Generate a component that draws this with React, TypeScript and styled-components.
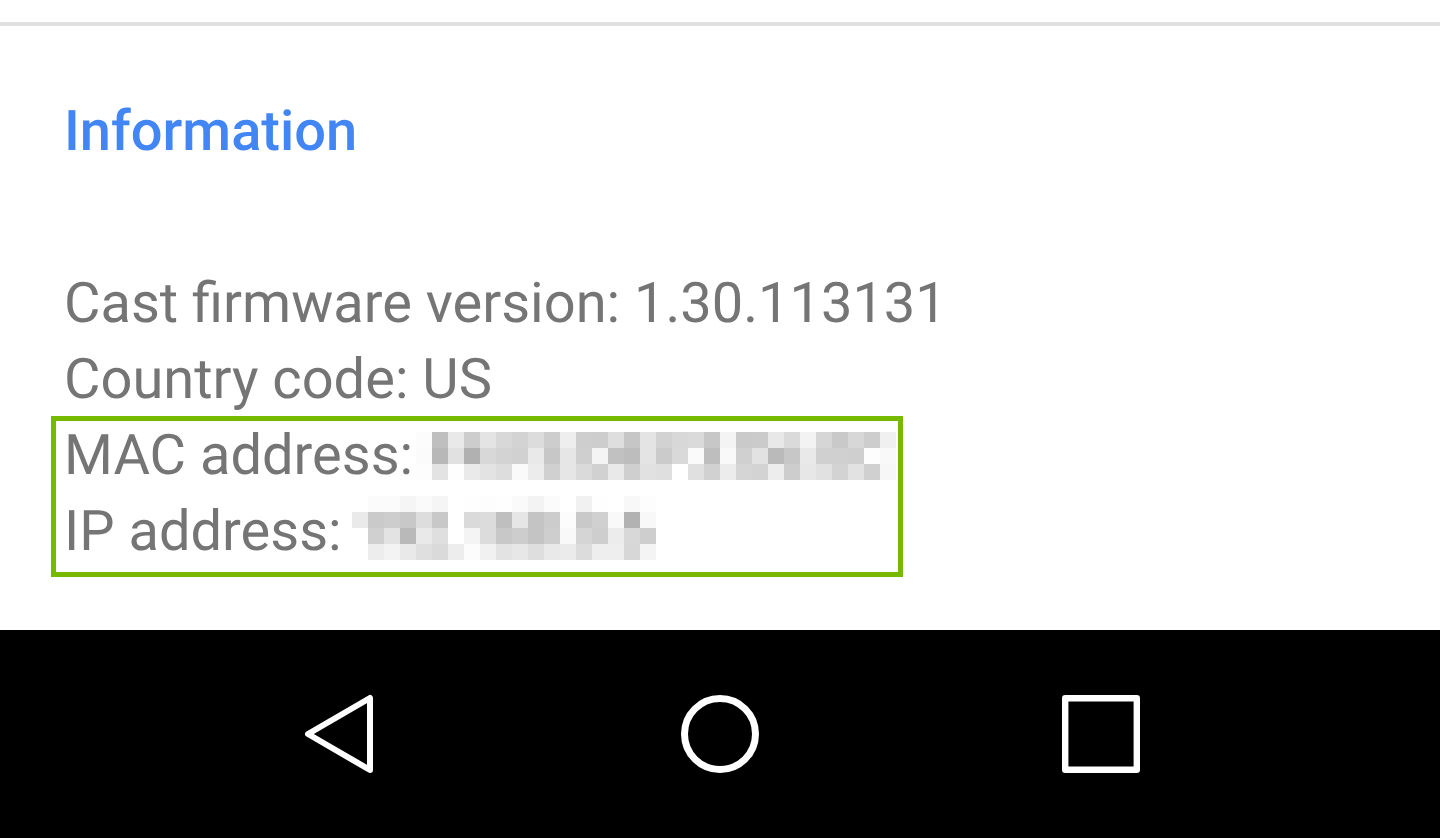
import React from "react";
import styled, { createGlobalStyle } from "styled-components";

const GlobalStyle = createGlobalStyle`
  *, *::before, *::after { box-sizing: border-box; }
  body {
    margin: 0;
    background: #ffffff;
    color: #757575;
    font-family: Roboto, "Liberation Sans", sans-serif;
    text-rendering: geometricPrecision;
  }
`;

const Screen = styled.div`
  display: flex;
  flex-direction: column;
  min-height: 100vh;
`;

const Content = styled.main`
  flex: 1;
  padding: 22px 0 52px;
`;

const Divider = styled.hr`
  height: 4px;
  margin: 0;
  border: 0;
  background: #e0e0e0;
`;

const Section = styled.section`
  padding: 71px 64px 0;
  font-size: 56px;
  line-height: 68px;
`;

const Heading = styled.h1`
  margin: 0 0 104px;
  color: #4285f4;
  font-size: inherit;
  font-weight: 500;
`;

const Details = styled.div`
  display: flex;
  flex-direction: column;
  gap: 8px;
`;

const Row = styled.p`
  display: flex;
  margin: 0;
  white-space: pre;
`;

const Highlight = styled.div`
  display: flex;
  flex-direction: column;
  gap: 8px;
  width: 852px;
  max-width: 100%;
  margin: -5px 0 0 -13px;
  padding: 0 8px 7px;
  border: 5px solid #76b900;
`;

const MosaicSvg = styled.svg<{ $top: number; $gap: number }>`
  flex: none;
  margin: ${(p) => p.$top}px 0 0 ${(p) => p.$gap}px;
`;

const NavBar = styled.nav`
  display: grid;
  grid-template-columns: repeat(3, 1fr);
  align-items: center;
  justify-items: center;
  height: 208px;
  padding: 0 150px;
  background: #000000;
`;

const NavButton = styled.button`
  display: flex;
  padding: 0;
  border: 0;
  background: none;
  cursor: pointer;
`;

const NavIcon = styled.svg`
  width: 80px;
  height: 80px;
  fill: none;
  stroke: #ffffff;
  stroke-linejoin: round;
`;

/* Grey levels of each mosaic block, one string of hex pairs per row. */
const MAC_BLOCKS = [
  "fc bf e9 cd e4 d8 d3 dc cd ee ce cd de c6 e4 d2 d8 da c7 f4 ca cb e8 da f3 d6 c9 d7 cd f0",
  "fb b8 e1 b1 d8 d3 d1 e9 c7 e6 cf f4 c1 bd e4 cb d9 fa be f9 d0 e2 ba c7 e9 d0 d0 cf fd f9",
  "fd e3 fe ea e3 dd fa ec d0 e6 da d1 e9 cf e1 df ff e0 d1 ec d5 d3 ed cd e7 e1 d3 e2 d0 f7",
];

const IP_BLOCKS = [
  "ff fb fb f5 fa f5 ff fe fd fe fa f3 fb ff f1 fe ff f8 fd",
  "ea ca cd c8 dd c8 ff da dc bf e6 c4 cc fc c9 d0 f9 b2 f8",
  "ff d0 e3 b9 e9 df ff f4 dc c8 cd c4 ce f9 d5 ce ec d8 ce",
  "ff ed f3 e9 df da ed fc f1 e3 e7 de e9 eb dc ee ee d7 f4",
];

const BLOCK = 16;

function Mosaic({ rows, top, gap, label }: { rows: string[]; top: number; gap: number; label: string }) {
  const cells = rows.map((row) => row.split(" "));
  return (
    <MosaicSvg
      $top={top}
      $gap={gap}
      width={cells[0].length * BLOCK}
      height={cells.length * BLOCK}
      shapeRendering="crispEdges"
      role="img"
      aria-label={label}
    >
      {cells.map((row, y) =>
        row.map((level, x) => (
          <rect
            key={`${x}-${y}`}
            x={x * BLOCK}
            y={y * BLOCK}
            width={BLOCK}
            height={BLOCK}
            fill={`#${level}${level}${level}`}
          />
        ))
      )}
    </MosaicSvg>
  );
}

export default function App() {
  return (
    <Screen>
      <GlobalStyle />
      <Content>
        <Divider />
        <Section>
          <Heading>Information</Heading>
          <Details>
            <Row>Cast firmware version: 1.30.113131</Row>
            <Row>Country code: US</Row>
            <Highlight>
              <Row>
                MAC address:
                <Mosaic rows={MAC_BLOCKS} top={11} gap={3} label="Hidden MAC address" />
              </Row>
              <Row>
                IP address:
                <Mosaic rows={IP_BLOCKS} top={-1} gap={10} label="Hidden IP address" />
              </Row>
            </Highlight>
          </Details>
        </Section>
      </Content>
      <NavBar aria-label="System navigation">
        <NavButton type="button" aria-label="Back">
          <NavIcon viewBox="0 0 80 80">
            <path d="M8 40L70 4V76Z" strokeWidth="6" />
          </NavIcon>
        </NavButton>
        <NavButton type="button" aria-label="Home">
          <NavIcon viewBox="0 0 80 80">
            <circle cx="40" cy="40" r="35.5" strokeWidth="7" />
          </NavIcon>
        </NavButton>
        <NavButton type="button" aria-label="Recent apps">
          <NavIcon viewBox="0 0 80 80">
            <rect x="5.2" y="4.2" width="71.6" height="71.6" strokeWidth="6.4" />
          </NavIcon>
        </NavButton>
      </NavBar>
    </Screen>
  );
}
